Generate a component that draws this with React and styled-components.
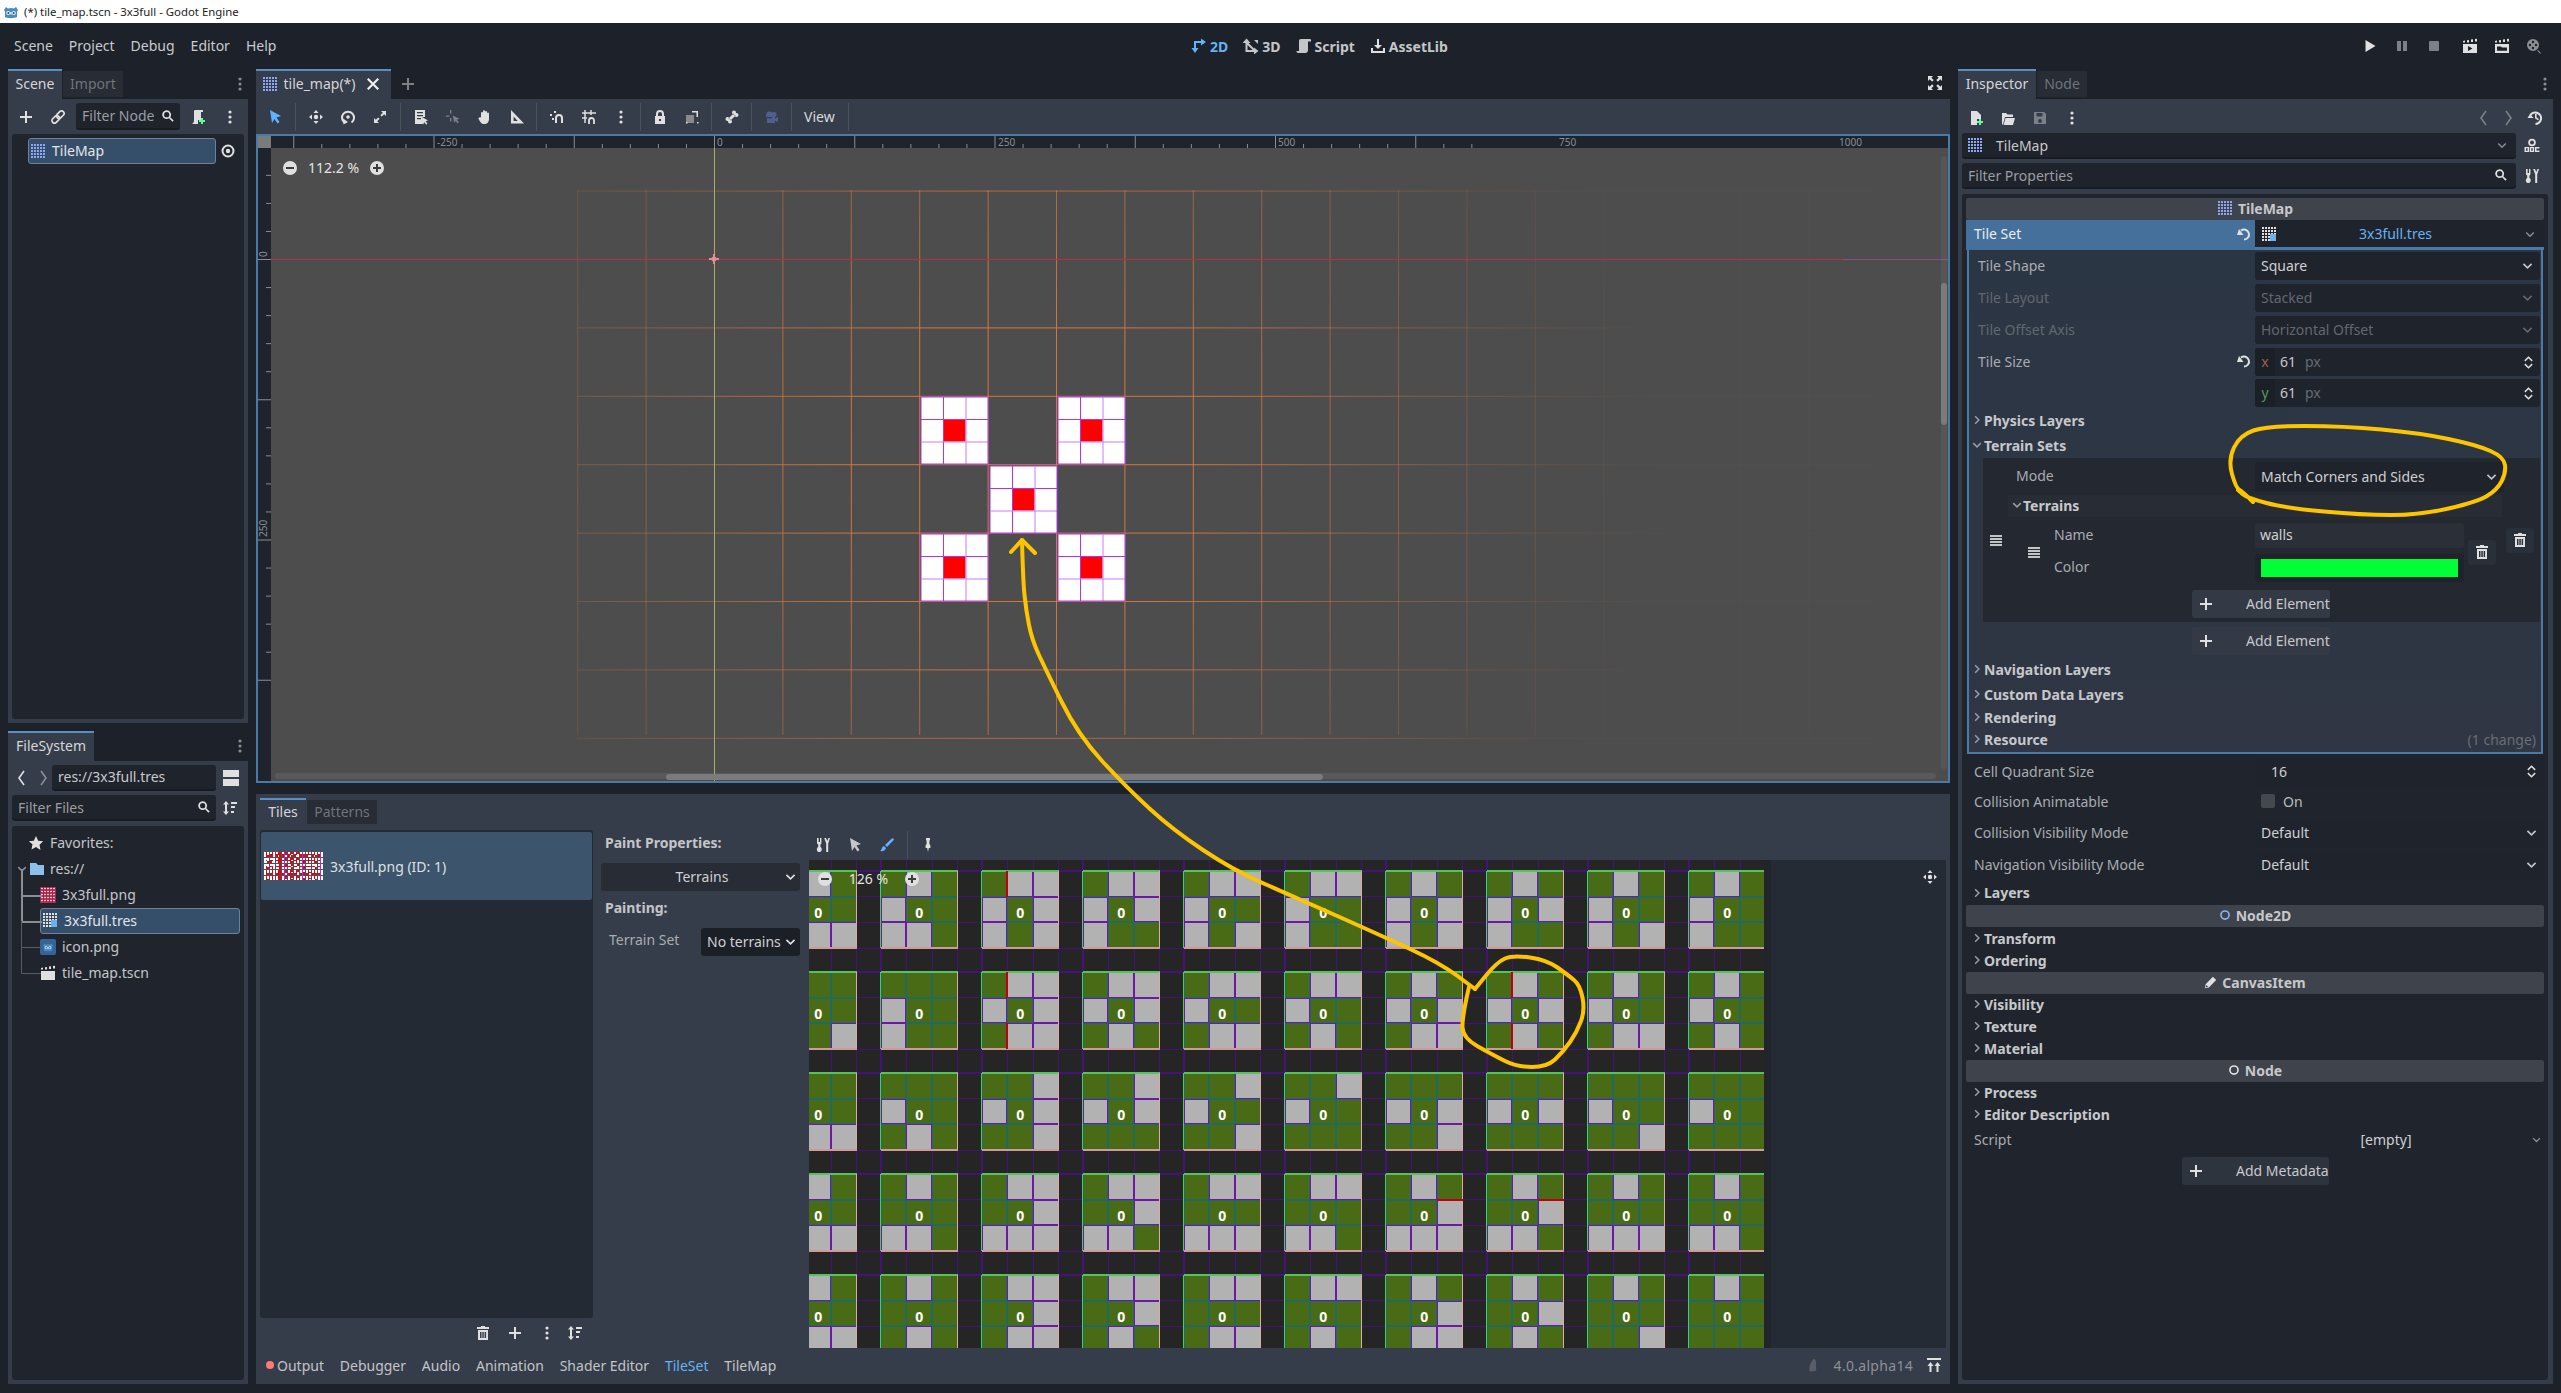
import React from "react";
import styled, { createGlobalStyle } from "styled-components";

const BASE = "#1d2129";
const PANEL = "#363d4a";
const DARK = "#20252d";
const FIELD = "#1f232b";
const BLUE = "#4a7aa8";
const TEXT = "#d9dadc";
const LABEL = "#a9acb1";
const DISABLED = "#62676f";

const GlobalStyle = createGlobalStyle`
  html, body { margin: 0; padding: 0; width: 100%; height: 100%; overflow: hidden; background: ${BASE}; }
  #root { width: 100%; height: 100%; }
  * { box-sizing: border-box; }
`;

const range = (a, n, step = 1) => Array.from({ length: n }, (_, i) => a + i * step);
const ball = (x, y, r) => `M${x - r} ${y}a${r} ${r} 0 1 0 ${2 * r} 0a${r} ${r} 0 1 0 ${-2 * r} 0z`;
const dotGrid = (fill) =>
  range(1, 5, 3).flatMap((x) => range(1, 5, 3).map((y) => <rect key={x + "-" + y} x={x} y={y} width="2" height="2" fill={fill} />));

// godot editor icons, drawn on a 16 grid
const Glyphs = {
  plus: <path d="M7 2h2v5h5v2H9v5H7V9H2V7h5z" />,
  close: <path d="M3.500 2L8 6.500 12.500 2 14 3.500 9.500 8 14 12.500 12.500 14 8 9.500 3.500 14 2 12.500 6.500 8 2 3.500z" />,
  dots: <path d={ball(8, 3, 1.6) + ball(8, 8, 1.6) + ball(8, 13, 1.6)} />,
  search: <path fillRule="evenodd" d="M6.5 1.5a5 5 0 1 0 2.8 9.1l3.8 3.9 1.4-1.4-3.9-3.8a5 5 0 0 0-4.1-7.8zm0 2a3 3 0 1 1 0 6 3 3 0 0 1 0-6z" />,
  chevron: <path d="M3 6l5 5 5-5" fill="none" stroke="currentColor" strokeWidth="2" />,
  chevronRight: <path d="M5 2l6 6-6 6" fill="none" stroke="currentColor" strokeWidth="2.4" />,
  chevronOpen: <path d="M2 5l6 6 6-6" fill="none" stroke="currentColor" strokeWidth="2.4" />,
  left: <path d="M10 1L5 8l5 7" fill="none" stroke="currentColor" strokeWidth="1.6" />,
  right: <path d="M6 1l5 7-5 7" fill="none" stroke="currentColor" strokeWidth="1.6" />,
  link: (
    <g transform="rotate(45 8 8)" fill="none" stroke="currentColor" strokeWidth="1.7">
      <rect x="5.5" y="0.5" width="5" height="8.5" rx="2.5" />
      <rect x="5.5" y="7" width="5" height="8.5" rx="2.5" />
    </g>
  ),
  scriptAdd: (
    <>
      <path d="M5 1h8v2h-2v8H8v4H2c1.4-1 2-2 2-4V3c0-1 0-2 1-2z" />
      <path d="M11 9h2v2h2v2h-2v2h-2v-2H9v-2h2z" fill="#5fff97" />
    </>
  ),
  eye: <path fillRule="evenodd" d={ball(8, 8, 6.5) + ball(8, 8, 4.5) + ball(8, 8, 2.2)} />,
  zoomOut: (
    <>
      <path d={ball(8, 8, 7)} />
      <rect x="4" y="7" width="8" height="2" fill="#3c3c3c" />
    </>
  ),
  zoomIn: (
    <>
      <path d={ball(8, 8, 7)} />
      <path d="M7 4h2v3h3v2H9v3H7V9H4V7h3z" fill="#3c3c3c" />
    </>
  ),
  select: <path d="M3 1l11 6-4.5 1.5L12.5 13l-2 1.5-3-4.6L5 14z" />,
  move: <path d={"M8 1l2.5 3h-5zM8 15l-2.5-3h5zM1 8l3-2.5v5zM15 8l-3 2.5v-5z" + ball(8, 8, 2.2)} />,
  rotate: (
    <>
      <path d="M4.5 13.5A6 6 0 1 1 11.5 13.5" fill="none" stroke="currentColor" strokeWidth="2" />
      <path d={ball(8, 8, 1.8) + "M3 9.5l5 3.5-4.5 2.5z"} />
    </>
  ),
  scale: <path d="M9 2h5v5l-1.8-1.8-2.4 2.4-1.4-1.4 2.4-2.4zM7 14H2V9l1.8 1.8 2.4-2.4 1.4 1.4-2.4 2.4z" />,
  listSelect: <path fillRule="evenodd" d="M2 1h10v7H9l1 7H2zM4 3v1.2h6V3zM4 6v1.2h6V6zM4 9v1.2h4V9zM9 8l6 3.4-2.4.9 1.8 2.3-1.2 1.1-1.8-2.4-1.4 2.1z" />,
  pivot: <path d="M5 1h1.4v3.5H5zM1 6.4h3.5v1.4H1zM7.8 6.4l6.6 3.4-2.6 1 2 2.5-1.2 1.1-2-2.6-1.4 2.3zM5 9h1.4v3.5H5z" />,
  hand: <path d="M4 8.5V4a1 1 0 0 1 2 0V2.2a1 1 0 0 1 2 0V3a1 1 0 0 1 2 0v1.5a1 1 0 0 1 2 0V10c0 3-2 5-4.5 5S4 14 2.4 11.4L1.6 10c-.6-1 1-2.4 2.4-1.5z" />,
  ruler: <path fillRule="evenodd" d="M2 1l13 13.5H2zM4.6 7.6v4.3h4.2z" />,
  snap: (
    <>
      <path d="M7 14V9a3 3 0 0 1 6 0v5" fill="none" stroke="currentColor" strokeWidth="2" />
      <path d="M1 5h2v2H1zM5 2h2v2H5zM3 9h2v2H3z" />
    </>
  ),
  gridSnap: (
    <>
      <path d="M4 1v13M10 1v5M1 4h14M1 9h5" fill="none" stroke="currentColor" strokeWidth="1.5" />
      <path d="M8 15v-3.5a2.5 2.5 0 0 1 5 0V15" fill="none" stroke="currentColor" strokeWidth="1.8" />
    </>
  ),
  lock: (
    <>
      <path d="M5 7V5a3 3 0 0 1 6 0v2" fill="none" stroke="currentColor" strokeWidth="2" />
      <path fillRule="evenodd" d="M3 7h10v8H3zM7 10v2h2v-2z" />
    </>
  ),
  group: (
    <>
      <rect x="2" y="6" width="8" height="8" fill="#8a8a8a" />
      <path fillRule="evenodd" d="M8 2h6v6h-1.5V3.5H8zM2 13h1.5v1.5H2zM13 13h1.5v1.5H13z" />
    </>
  ),
  bone: <path d={"M4.5 9.5l5-5 2 2-5 5z" + ball(10, 3.5, 2) + ball(12.5, 6, 2) + ball(3.5, 10, 2) + ball(6, 12.5, 2)} />,
  camera: <path d={ball(5.5, 6, 3.5) + ball(10, 5.5, 2.5) + "M3 8h8v6H3zM11 9.5l3-1.5v5l-3-1.5z"} />,
  view2d: (
    <>
      <path d="M4 11V4h7" fill="none" stroke="currentColor" strokeWidth="2" />
      <path d="M0.5 10h7L4 15zM10 0.5v7L15 4z" />
    </>
  ),
  view3d: (
    <>
      <path d="M3.5 4v9h9M4 5l8 8" fill="none" stroke="currentColor" strokeWidth="2" />
      <path d="M3.5 0.5L7.5 5h-8zM15.5 13l-4.5 3.5v-7z" />
      <path d="M11 2h4v4z" />
    </>
  ),
  script: <path d="M5 1h9c1 0 1.4 1.2 1 2.4h-3V12c0 1.6-1 3-2.5 3H2c-.8 0-1.6-.8-1.6-2h2.6V3c0-1.2.6-2 2-2z" />,
  assetLib: <path d="M7 1h2v6h3l-4 4-4-4h3zM1 10h2v3h10v-3h2v5H1z" />,
  play: <path d="M3.5 2l10 6-10 6z" />,
  pause: <path d="M3 3h4v10H3zM9 3h4v10H9z" />,
  stop: <rect x="3" y="3" width="10" height="10" rx="1" />,
  clapPlay: <path fillRule="evenodd" d="M1 6h14v9H1zM6 8v5l4.5-2.5zM1 3l2-.4v2H1zM5 2.2l2-.3v2.6H5zM9 1.6l2-.3V4H9zM13 1l2-.3V3.6h-2z" />,
  clapOpen: <path fillRule="evenodd" d="M1 6h14v9H1zM3 8.4v4.4h10V9.6H8L7 8.4zM1 3l2-.4v2H1zM5 2.2l2-.3v2.6H5zM9 1.6l2-.3V4H9zM13 1l2-.3V3.6h-2z" />,
  movie: <path fillRule="evenodd" d={ball(7, 7, 6) + ball(7, 4, 1.2) + ball(7, 10, 1.2) + ball(4, 7, 1.2) + ball(10, 7, 1.2) + "M12 12l3 3-.8.8-3-3z"} />,
  trash: <path fillRule="evenodd" d="M6 1h4v1h4v2H2V2h4zM3 5h10v10H3zM5 7v6h1.5V7zM7.3 7v6h1.5V7zM9.6 7v6h1.5V7z" />,
  handle: <path d="M2 3h12v2H2zM2 6h12v2H2zM2 9h12v2H2zM2 12h12v2H2z" />,
  reload: (
    <>
      <path d="M5 4.6A5 5 0 1 1 8 13.6" fill="none" stroke="currentColor" strokeWidth="2" />
      <path d="M1 9h6.5L3 3z" />
    </>
  ),
  doc: (
    <>
      <path fillRule="evenodd" d={ball(8, 4.5, 3.8) + ball(8, 4.5, 2)} />
      <path fillRule="evenodd" d="M0.5 9h4.6v5H0.5zM2 10.2v2.6h1.6v-2.6zM5.8 9h4.4v5H5.8zM7.3 10.2v2.6h1.4v-2.6zM11 9h4.4v1.4H12.4v2.2h3V14H11z" />
    </>
  ),
  tools: (
    <>
      <path d="M2 1h1.6v4H5V1h1.4v5.4l-1 1V10c1.4.6 1.6 2.2 1.2 3.4C6 14.6 5 15 4.2 15s-1.8-.5-2.2-1.6C1.6 12.2 2 10.600 3.2 10V7.400L2 6.400z" />
      <path d="M9.200 1H11l1.200 3L13.500 1H15l-1.800 5.400V15h-2V6.400z" />
    </>
  ),
  history: (
    <>
      <path d="M3.400 5A5.800 5.800 0 1 1 8.500 14" fill="none" stroke="currentColor" strokeWidth="2" />
      <path d="M0.500 8h6L3 4zM8 4h1.600v3.400L12 9l-1 1.300-3-2z" />
    </>
  ),
  fileAdd: (
    <>
      <path d="M3 1h6l4 4v4H9v6H3z" />
      <path d="M11 9h2v2h2v2h-2v2h-2v-2H9v-2h2z" fill="#5fff97" />
    </>
  ),
  folderOpen: <path fillRule="evenodd" d="M2 3h4l1.500 1.500H13V7H5L3 14.500H2zM5.500 8H15l-2 7H3.600z" />,
  save: <path fillRule="evenodd" d="M2 2h10l2 2v10H2zM4.500 3v3.500h6V3zM8 9a2 2 0 1 0 0 4 2 2 0 0 0 0-4z" />,
  updown: <path d="M3.500 6L8 1.500 12.500 6M3.500 10L8 14.500 12.500 10" fill="none" stroke="currentColor" strokeWidth="1.800" />,
  star: <path d="M8 1l2.200 4.800 5 .5-3.700 3.400 1 5.300L8 12l-4.500 2.500 1-5.300L.8 6.300l5-.5z" />,
  folder: <path d="M1 2h6l2 2h6v10H1z" />,
  clap: <path d="M1 6h14v9H1zM1 3l2-.4v2H1zM5 2.200l2-.3v2.600H5zM9 1.600l2-.3V4H9zM13 1l2-.3V3.600h-2z" />,
  split: <path d="M0 0h16v7H0zM0 9h16v7H0z" />,
  sort: <path d="M4 1l3 3.500H5v7h2l-3 3.500-3-3.500h2v-7H1zM9 2h6v2H9zM9 6h4v2H9zM9 11h3v2H9z" />,
  fullscreen: <path d="M1 1h5L4.300 2.700l2.400 2.400-1.600 1.600-2.400-2.400L1 6zM15 15h-5l1.700-1.700-2.400-2.400 1.600-1.600 2.400 2.400L15 10zM15 1v5l-1.700-1.700-2.400 2.400-1.600-1.600 2.400-2.400L10 1zM1 15v-5l1.700 1.700 2.400-2.400 1.600 1.600-2.400 2.400L6 15z" />,
  pin: <path d="M6 1h4v2l-.6.4V7l1 1.600V11H8.800L8 15l-.8-4H5.600V8.600l1-1.600V3.400L6 3z" />,
  brush: <path d="M14.500 1.500c.6.600.4 1.400-.2 2L8 10 6 8l6.500-6.300c.6-.6 1.400-.8 2-.2zM5 9l2 2c-.4 2.500-3 3.500-6 3 1.500-1 1.500-2 2-3.300C3.400 10 4 9.400 5 9z" />,
  pen: <path d="M11 1l4 4-9 9-5 1 1-5zM2.800 11l-.8 3 3-.8z" />,
  ring: <path fillRule="evenodd" d={ball(8, 8, 6.500) + ball(8, 8, 4.300)} />,
  signal: <path d="M9 2c2 0 2 3 2 6s1 5-1 6l-5 .5c-1-1-.5-2-.5-4s3-8.500 4.500-8.500z" />,
  pinBottom: <path d="M1 1h14v2H1zM4.500 5l3 4h-2v6H3.500V9h-2zM11.500 5l3 4h-2v6h-2V9h-2z" />,
  tilemap: <>{dotGrid("currentColor")}</>,
  tileset: (
    <>
      {dotGrid("#e0e0e0")}
      <rect x="9" y="8" width="6" height="7" fill="#6db0ee" />
    </>
  ),
  godot: (
    <>
      <path d="M3 3l2 1.500L8 4l3 .5L13 3l2 3-1 1.500V13c-2 1.500-10 1.500-12 0V7.500L1 6z" fill="#478cbf" />
      <path d={ball(5.200, 9, 2) + ball(10.800, 9, 2)} fill="#e8eef4" />
      <path d={ball(5.400, 9, 1) + ball(10.600, 9, 1)} fill="#2c4660" />
      <rect x="7.200" y="8" width="1.600" height="2.400" fill="#e8eef4" />
    </>
  ),
};

const Svg = styled.svg`
  display: block;
  flex: none;
  width: ${(p) => p.$size}px;
  height: ${(p) => p.$size}px;
  color: ${(p) => p.$color};
  fill: currentColor;
`;

const Icon = ({ name, size = 16, color = "#e0e0e0" }) => (
  <Svg viewBox="0 0 16 16" $size={size} $color={color}>
    {Glyphs[name]}
  </Svg>
);

const Page = styled.div`
  width: 100vw;
  height: 100vh;
  position: relative;
  display: flex;
  flex-direction: column;
  background: ${BASE};
  color: ${TEXT};
  font-family: "Noto Sans", sans-serif;
  font-size: 14px;
  white-space: nowrap;
`;

const TitleBar = styled.div`
  height: 23px;
  flex: none;
  display: flex;
  align-items: center;
  gap: 5px;
  padding-left: 3px;
  background: #fff;
  color: #222;
  font-size: 11.4px;
`;

const MenuBar = styled.div`
  height: 46px;
  flex: none;
  display: flex;
  align-items: center;
`;

const MenuLeft = styled.div`
  width: 1191px;
  flex: none;
  display: flex;
  gap: 16px;
  padding-left: 14px;
  padding-bottom: 2px;
  color: #c9cbce;
`;

const Screens = styled.div`
  display: flex;
  gap: 15px;
`;

const ScreenBtn = styled.div`
  display: flex;
  align-items: center;
  gap: 3px;
  font-weight: 700;
  color: ${(p) => (p.$active ? "#63b3f5" : "#c4c6c9")};
`;

const RunBtns = styled.div`
  margin-left: auto;
  margin-right: 11px;
  display: flex;
`;

const Slot = styled.div`
  width: ${(p) => p.$w || 32}px;
  margin-left: ${(p) => p.$ml || 0}px;
  flex: none;
  display: flex;
  align-items: center;
  justify-content: center;
`;

const Main = styled.div`
  flex: 1;
  min-height: 0;
  display: flex;
  gap: 8px;
  padding: 0 8px 9px;
`;

const LeftCol = styled.div`
  width: 240px;
  flex: none;
  display: flex;
  flex-direction: column;
  gap: 8px;
`;

const Dock = styled.div`
  flex: 1;
  min-height: 0;
  display: flex;
  flex-direction: column;
`;

const TabRow = styled.div`
  height: ${(p) => p.$h || 30}px;
  flex: none;
  display: flex;
  align-items: flex-start;
`;

const Tab = styled.div`
  width: ${(p) => p.$w}px;
  flex: none;
  display: flex;
  align-items: center;
  justify-content: center;
  gap: 5px;
  margin-top: ${(p) => (p.$active ? 0 : 2)}px;
  margin-left: ${(p) => (p.$active ? 0 : 1)}px;
  padding-bottom: ${(p) => (p.$active ? 3 : 2)}px;
  height: ${(p) => (p.$active ? p.$tall || 30 : (p.$tall || 30) - 4)}px;
  background: ${(p) => (p.$active ? PANEL : "#272c35")};
  border-top: ${(p) => (p.$active ? `2px solid #5a8fc5` : "none")};
  color: ${(p) => (p.$active ? "#d4d5d8" : "#6f747b")};
`;

const TabDots = styled.div`
  margin-left: auto;
  margin-top: 7px;
  margin-right: 0;
  opacity: 0.55;
`;

const DockBody = styled.div`
  flex: 1;
  min-height: 0;
  display: flex;
  flex-direction: column;
  gap: 4px;
  padding: 4px;
  background: ${PANEL};
`;

const ToolRow = styled.div`
  height: ${(p) => p.$h || 27}px;
  flex: none;
  display: flex;
  align-items: center;
`;

const FieldBox = styled.div`
  flex: ${(p) => (p.$w ? "none" : 1)};
  width: ${(p) => (p.$w ? `${p.$w}px` : "auto")};
  height: ${(p) => p.$h || 27}px;
  margin-left: ${(p) => p.$ml || 0}px;
  display: flex;
  align-items: center;
  justify-content: space-between;
  padding: 0 5px 0 6px;
  background: ${FIELD};
  border-bottom: 2px solid #181b21;
  border-radius: 3px;
  color: ${(p) => p.$color || "#9a9da2"};
`;

const TreeBox = styled.div`
  flex: 1;
  min-height: 0;
  padding-top: 4px;
  background: ${DARK};
  border-radius: 3px;
`;

const SceneRow = styled.div`
  height: 26px;
  display: flex;
  align-items: center;
`;

const SelectedNode = styled.div`
  width: ${(p) => p.$w}px;
  height: 26px;
  margin-left: ${(p) => p.$ml}px;
  display: flex;
  align-items: center;
  gap: ${(p) => p.$gap || 6}px;
  padding-left: 1px;
  padding-bottom: 1px;
  background: #354f6a;
  border: 1px solid #6f8296;
  border-radius: 3px;
  color: #e4e5e7;
`;

const FsRow = styled.div`
  position: relative;
  height: 26px;
  display: flex;
  align-items: center;
  gap: ${(p) => p.$gap ?? 6}px;
  padding-left: ${(p) => p.$indent}px;
  color: #c4c6c9;

  &::before {
    content: ${(p) => (p.$branch ? '""' : "none")};
    position: absolute;
    left: 9px;
    top: -13px;
    width: 19px;
    height: 26px;
    border-left: ${(p) => (p.$strong ? "2px solid #8a8d92" : "1px solid #565a61")};
    border-bottom: ${(p) => (p.$strong ? "2px solid #8a8d92" : "1px solid #565a61")};
  }
`;

const FolderName = styled.span`
  margin-left: 3px;
`;

const CenterCol = styled.div`
  flex: 1;
  min-width: 0;
  display: flex;
  flex-direction: column;
  gap: 11px;
`;

const EditorBlock = styled.div`
  height: 714px;
  flex: none;
  display: flex;
  flex-direction: column;
`;

const AddTab = styled.div`
  margin: 7px 0 0 9px;
  opacity: 0.5;
`;

const FullBtn = styled.div`
  margin: 6px 7px 0 auto;
`;

const ViewToolbar = styled.div`
  height: 35px;
  flex: none;
  display: flex;
  align-items: center;
  padding-left: 3px;
  background: ${PANEL};
`;

const Sep = styled.div`
  width: 1px;
  height: 28px;
  flex: none;
  margin: 0 ${(p) => p.$r ?? 4}px 0 ${(p) => p.$l ?? 4}px;
  background: #4b525e;
`;

const ViewportFrame = styled.div`
  position: relative;
  flex: 1;
  min-height: 0;
  border: 2px solid ${BLUE};
  background: #4d4d4d;
  overflow: hidden;
`;

const ZoomWidget = styled.div`
  position: absolute;
  left: ${(p) => p.$x}px;
  top: ${(p) => p.$y}px;
  display: flex;
  align-items: center;
  color: #e4e4e4;
`;

const ZoomValue = styled.div`
  width: ${(p) => p.$w}px;
  text-align: center;
`;

const Scroll = styled.div`
  position: absolute;
  background: ${(p) => p.$c};
  border-radius: 3px;
`;

const BottomPanel = styled.div`
  flex: 1;
  min-height: 0;
  display: flex;
  flex-direction: column;
  background: ${PANEL};
`;

const BottomBody = styled.div`
  height: 554px;
  flex: none;
  display: flex;
  padding: 4px 4px 0;
`;

const SourceCol = styled.div`
  width: 333px;
  flex: none;
  display: flex;
  flex-direction: column;
`;

const SourceList = styled.div`
  margin-top: 4px;
  height: 488px;
  padding: 2px 1px;
  background: #242a33;
  border-radius: 3px;
`;

const SourceItem = styled.div`
  height: 68px;
  display: flex;
  align-items: center;
  gap: 6px;
  padding-left: 3px;
  background: #3d546d;
  border-radius: 2px;
  color: #dfe0e2;
`;

const SourceActions = styled.div`
  height: 30px;
  display: flex;
  align-items: center;
  justify-content: flex-end;
  padding-right: 6px;
`;

const PaintCol = styled.div`
  width: 216px;
  flex: none;
  padding-top: 32px;
  display: flex;
  flex-direction: column;
`;

const PaintHead = styled.div`
  height: 26px;
  display: flex;
  align-items: center;
  padding-left: 12px;
  padding-bottom: 2px;
  font-weight: 700;
  color: #c3c5c9;
`;

const PaintSelect = styled.div`
  height: 28px;
  width: ${(p) => p.$w}px;
  margin-left: ${(p) => p.$ml}px;
  margin-top: 7px;
  margin-bottom: 4px;
  display: flex;
  align-items: center;
  justify-content: space-between;
  padding: 0 3px 2px 6px;
  background: ${(p) => (p.$dark ? "#1b1f26" : "#272c35")};
  border-radius: 3px;
  color: #cfd0d3;
`;

const CenterLabel = styled.span`
  flex: 1;
  text-align: center;
  padding-left: ${(p) => p.$pl || 0}px;
  padding-right: ${(p) => p.$pr || 0}px;
`;

const TerrainSetRow = styled.div`
  display: flex;
  align-items: center;
`;

const DimLabel = styled.div`
  width: 108px;
  padding-left: 16px;
  padding-bottom: 2px;
  color: ${LABEL};
`;

const AtlasCol = styled.div`
  flex: 1;
  min-width: 0;
  padding-top: 32px;
  display: flex;
  flex-direction: column;
`;

const AtlasTools = styled.div`
  height: 30px;
  flex: none;
  margin-left: -2px;
  display: flex;
  align-items: center;
`;

const AtlasSep = styled.div`
  width: 1px;
  height: 28px;
  background: #4b525e;
  margin: 0 4px 0 4px;
`;

const AtlasView = styled.div`
  position: relative;
  height: 488px;
  flex: none;
  display: flex;
  background: #252b35;
  overflow: hidden;
`;

const AtlasStrip = styled.div`
  width: 7px;
  flex: none;
  background: #21252b;
`;

const AtlasMove = styled.div`
  position: absolute;
  right: 8px;
  top: 9px;
`;

const StatusBar = styled.div`
  height: 36px;
  flex: none;
  display: flex;
  align-items: center;
  padding: 0 8px 2px 10px;
`;

const StatusDot = styled.div`
  width: 8px;
  height: 8px;
  margin-right: 3px;
  border-radius: 50%;
  background: #ff7a70;
`;

const StatusItems = styled.div`
  display: flex;
  gap: 15.8px;
  color: #c2c4c8;
`;

const StatusItem = styled.span`
  color: ${(p) => (p.$active ? "#63b3f5" : "inherit")};
`;

const Version = styled.div`
  margin-left: auto;
  display: flex;
  align-items: center;
  gap: 13px;
  letter-spacing: 0.3px;
  color: #8d9097;
`;

const RightCol = styled.div`
  width: 595px;
  flex: none;
  display: flex;
  flex-direction: column;
`;

const InspectorBody = styled.div`
  flex: 1;
  min-height: 0;
  display: flex;
  flex-direction: column;
  padding: 4px 5px 4px 4px;
  background: ${PANEL};
`;

const InspectorTools = styled.div`
  height: 30px;
  flex: none;
  margin-left: -2px;
  display: flex;
  align-items: center;
`;

const HeadRow = styled.div`
  height: 26px;
  flex: none;
  margin-bottom: 4px;
  display: flex;
  align-items: center;
`;

const HeadField = styled.div`
  width: 554px;
  height: 26px;
  flex: none;
  display: flex;
  align-items: center;
  gap: 12px;
  padding: 0 8px 0 5px;
  background: ${FIELD};
  border-bottom: 2px solid #181b21;
  border-radius: 3px;
  color: ${(p) => p.$color};
`;

const HeadText = styled.span`
  flex: 1;
  margin-left: ${(p) => p.$ml || 0}px;
`;

const PropsBox = styled.div`
  flex: 1;
  min-height: 0;
  margin-top: 1px;
  padding: 4px;
  background: ${DARK};
  border-radius: 3px;
`;

const ClassHeader = styled.div`
  height: 22px;
  display: flex;
  align-items: center;
  justify-content: center;
  gap: 5px;
  padding-bottom: 2px;
  background: #3f434c;
  border-radius: 2px;
  font-weight: 700;
  color: #c6c8cb;
`;

const TileSetRow = styled.div`
  height: 30px;
  display: grid;
  grid-template-columns: 289px 1fr;
`;

const ActiveLabel = styled.div`
  display: flex;
  align-items: center;
  justify-content: space-between;
  padding: 0 3px 3px 8px;
  background: #44709b;
  color: #eceef0;
`;

const ResourceValue = styled.div`
  display: flex;
  align-items: center;
  padding: 0 8px 0 6px;
  background: ${FIELD};
  border-bottom: 3px solid ${BLUE};
  color: #63b3f5;
`;

const Group = styled.div`
  margin: 0 1px;
  height: 504px;
  padding: 2px 1px 0 0;
  border: 2px solid ${BLUE};
  border-top: none;
  background: linear-gradient(#2b3644, #303643);
`;

const PropRow = styled.div`
  height: ${(p) => p.$h || 28}px;
  margin-top: ${(p) => p.$mt || 0}px;
  margin-bottom: ${(p) => p.$mb || 0}px;
  display: grid;
  grid-template-columns: ${(p) => p.$label || 286}px 1fr;
  align-items: stretch;
`;

const PropLabel = styled.div`
  height: 100%;
  max-height: 28px;
  display: flex;
  align-items: center;
  justify-content: space-between;
  padding: 0 3px 2px ${(p) => p.$pad ?? 9}px;
  color: ${(p) => (p.$off ? DISABLED : LABEL)};
`;

const ValueBox = styled.div`
  display: flex;
  align-items: center;
  justify-content: space-between;
  padding: 0 ${(p) => p.$r || 6}px ${(p) => (p.$flat ? 0 : 2)}px ${(p) => p.$l || 6}px;
  background: ${(p) => p.$bg || FIELD};
  border-radius: 3px;
  color: ${(p) => (p.$off ? DISABLED : "#cfd0d3")};
`;

const SizeStack = styled.div`
  display: flex;
  flex-direction: column;
  gap: 3px;
`;

const SpinBox = styled.div`
  height: 28px;
  display: flex;
  align-items: center;
  padding-right: 5px;
  background: ${FIELD};
  border-radius: 3px;
  color: #c8c9cc;
`;

const Axis = styled.div`
  width: 20px;
  height: 100%;
  display: flex;
  align-items: center;
  justify-content: center;
  padding-bottom: 2px;
  background: #1b1f26;
  border-radius: 3px 0 0 3px;
  color: ${(p) => p.$c};
`;

const SpinNum = styled.span`
  margin-left: 5px;
  margin-bottom: 2px;
`;

const SpinUnit = styled.span`
  margin-left: 9px;
  margin-right: auto;
  margin-bottom: 2px;
  color: #676b72;
`;

const Section = styled.div`
  height: ${(p) => p.$h || 22}px;
  margin-top: ${(p) => p.$mt || 0}px;
  display: flex;
  align-items: center;
  gap: 2px;
  padding-left: ${(p) => p.$pad ?? 3}px;
  padding-right: 4px;
  padding-bottom: 2px;
  font-weight: 700;
  color: #c6c8cb;
`;

const SectionNote = styled.span`
  margin-left: auto;
  font-weight: 400;
  color: #696e75;
`;

const DarkBlock = styled.div`
  height: 164px;
  margin-left: 14px;
  display: flex;
  align-items: center;
  background: #232831;
`;

const HandleSlot = styled.div`
  width: 25px;
  flex: none;
  display: flex;
  justify-content: center;
  opacity: 0.85;
`;

const ElementCol = styled.div`
  width: 496px;
  flex: none;
  display: flex;
  flex-direction: column;
`;

const TerrainsHead = styled.div`
  height: 22px;
  margin-top: 3px;
  margin-right: 2px;
  display: flex;
  align-items: center;
  gap: 1px;
  padding-left: 4px;
  padding-bottom: 2px;
  background: #272c35;
  font-weight: 700;
  color: #c6c8cb;
`;

const ElementRow = styled.div`
  height: 64px;
  margin-top: 3px;
  display: flex;
  align-items: center;
`;

const InnerHandle = styled.div`
  width: 46px;
  flex: none;
  padding-left: 18px;
  opacity: 0.85;
`;

const ElementFields = styled.div`
  width: 410px;
  flex: none;
  display: flex;
  flex-direction: column;
  gap: 6px;
`;

const ColorSwatch = styled.div`
  flex: 1;
  height: 18px;
  background: #00ff36;
`;

const TrashBtn = styled.div`
  width: 28px;
  height: 25px;
  flex: none;
  margin-left: ${(p) => p.$ml || 0}px;
  display: flex;
  align-items: center;
  justify-content: center;
  background: #2a3039;
  border-radius: 3px;
`;

const AddBtn = styled.div`
  width: ${(p) => p.$w || 138}px;
  height: 28px;
  margin-top: ${(p) => p.$mt || 0}px;
  margin-left: ${(p) => p.$ml}px;
  display: flex;
  align-items: center;
  gap: ${(p) => p.$gap || 32}px;
  padding-left: 6px;
  padding-bottom: 1px;
  background: ${(p) => p.$bg || "#343a45"};
  border-radius: 3px;
  color: #c8c9cc;
`;

const CheckBox = styled.div`
  width: 14px;
  height: 14px;
  background: #44484f;
  border-radius: 2px;
  margin-right: 8px;
`;

const CheckValue = styled.div`
  display: flex;
  align-items: center;
  padding-left: 6px;
  padding-bottom: 2px;
  color: #b9bbbf;
`;

const CanvasSvg = styled.svg`
  display: block;
  flex: none;
`;

const AxisText = styled.text`
  font-family: "Noto Sans", sans-serif;
  font-size: ${(p) => p.$size || 10}px;
  font-weight: ${(p) => p.$weight || 400};
`;

const Overlay = styled.svg`
  position: absolute;
  left: 0;
  top: 0;
  width: 2561px;
  height: 1393px;
  pointer-events: none;
`;

// tile patterns of the 3x3 atlas, # is terrain, . is wall
const ATLAS = [
  ["#.####" + "#..", "#.#.##..#", "#...#..#.", "#...#..##", "#...##.#.", "#...##.##", "#.#.#..#.", "#.#.#..##", "#.#.##.#.", "#.#.##.##"],
  ["#####" + "###.", "###.##.##", "#...#.#..", "#...#.#.#", "#...###..", "#...###.#", "#.#.#.#..", "#.#.#.#.#", "#.#.###..", "#.#.###.#"],
  ["#####" + "##..".slice(0, 4), "###.###.#", "##..#.##.", "##..#.###", "##..####.", "##..#####", "###.#.##.", "###.#.###", "###.####.", "###.#####"],
  ["#.#####..", "#.####..#", "#..##....", "#..##...#", "#..###...", "#..###..#", "#.###....", "#.###...#", "#.####...", "#.####..#"],
  ["#.#####..", "#.#####.#", "#..##.#..", "#..##.#.#", "#..####..", "#..####.#", "#.###.#..", "#.###.#.#", "#.####"+"##.", "#.#######"],
].map((row) => row.map((t) => t.padEnd(9, ".")));

const RED_V = [[2, 0, 0], [2, 1, 0], [2, 1, 2], [7, 1, 0], [7, 1, 2]];
const RED_H = [[6, 3], [7, 3]];

const PITCH = 101;
const CELL = 25.67;
const X0 = -29.3;
const Y0 = 11;

const TileAtlas = () => {
  const colsX = range(0, 10).flatMap((c) => [0, 1, 2, 3].map((i) => X0 + c * PITCH + i * CELL));
  const rowsY = range(0, 5).flatMap((r) => [0, 1, 2, 3].map((i) => Y0 + r * PITCH + i * CELL));
  return (
    <CanvasSvg width="955" height="488" viewBox="0 0 955 488" shapeRendering="crispEdges">
      <rect width="955" height="488" fill="#252525" />
      {colsX.map((x, i) => (
        <line key={"v" + i} x1={x} x2={x} y1="0" y2="488" stroke="#45117a" strokeWidth={i % 4 === 0 ? 2 : 1} />
      ))}
      {rowsY.map((y, i) => (
        <line key={"h" + i} y1={y} y2={y} x1="0" x2="955" stroke="#45117a" strokeWidth={i % 4 === 0 ? 2 : 1} />
      ))}
      {ATLAS.map((row, r) =>
        row.map((t, c) => {
          const tx = X0 + c * PITCH;
          const ty = Y0 + r * PITCH;
          return (
            <g key={c + "-" + r}>
              {[...t].map((ch, i) => {
                const green = ch === "#" || i === 4;
                return (
                  <rect
                    key={i}
                    x={tx + (i % 3) * CELL + 0.5}
                    y={ty + Math.floor(i / 3) * CELL + 0.5}
                    width={CELL - 1}
                    height={CELL - 1}
                    fill={green ? "#4a6b16" : "#b2b2b2"}
                    stroke={green ? "#1f6b62" : "#6e18a8"}
                    strokeWidth="1"
                  />
                );
              })}
              <line x1={tx} x2={tx + 77} y1={ty} y2={ty} stroke="#54c45a" strokeWidth="2" />
              <line x1={tx} x2={tx} y1={ty} y2={ty + 77} stroke="#45d24e" strokeWidth="1.500" />
              <line x1={tx + 77} x2={tx + 77} y1={ty} y2={ty + 77} stroke="#dcaaa6" strokeWidth="1.500" />
              <line x1={tx} x2={tx + 77} y1={ty + 77} y2={ty + 77} stroke="#cf9a98" strokeWidth="1.500" />
              <AxisText x={tx + 38.500} y={ty + 47} textAnchor="middle" fill="#fff" $size={14} $weight={700}>
                0
              </AxisText>
            </g>
          );
        })
      )}
      {RED_V.map(([c, r, k]) => (
        <rect key={`rv${c}${r}${k}`} x={X0 + c * PITCH + CELL - 1} y={Y0 + r * PITCH + k * CELL} width="2" height={CELL} fill="#c00010" />
      ))}
      {RED_H.map(([c, r]) => (
        <rect key={`rh${c}${r}`} x={X0 + c * PITCH + 2 * CELL} y={Y0 + r * PITCH + CELL - 1} width={CELL} height="2" fill="#c00010" />
      ))}
    </CanvasSvg>
  );
};

const SceneTile = ({ x, y }) => (
  <g>
    <rect x={x} y={y} width="67" height="67" fill="#fff" />
    <rect x={x + 22.500} y={y + 22.500} width="22" height="22" fill="#fe0000" />
    {[0, 22.500, 45, 67].map((o) => (
      <React.Fragment key={o}>
        <line x1={x + o} x2={x + o} y1={y} y2={y + 67} stroke={o === 45 ? "#c47cfb" : "#aa36f0"} strokeWidth="1" />
        <line y1={y + o} y2={y + o} x1={x} x2={x + 67} stroke={o === 45 ? "#c47cfb" : "#aa36f0"} strokeWidth="1" />
      </React.Fragment>
    ))}
  </g>
);

const Viewport2D = () => {
  const top = range(714 - 16 * 28.05, 44, 28.05).map((x, i) => ({ x, major: i % 5 === 1 }));
  const side = range(259 - 4 * 28.05, 20, 28.05).map((y, i) => ({ y, major: i % 5 === 4 }));
  const gridX = range(714 - 2 * 68.400, 20, 68.400);
  const gridY = range(259 - 68.400, 9, 68.400);
  return (
    <CanvasSvg width="1690" height="645" viewBox="258 136 1690 645">
      <defs>
        <radialGradient id="gridFade" gradientUnits="userSpaceOnUse" cx="1022" cy="465" r="640">
          <stop offset="0" stopColor="#d4763c" />
          <stop offset="0.25" stopColor="#d4763c" />
          <stop offset="0.55" stopColor="#d4763c" stopOpacity="0.5" />
          <stop offset="0.85" stopColor="#d4763c" stopOpacity="0.12" />
          <stop offset="1" stopColor="#d4763c" stopOpacity="0.03" />
        </radialGradient>
      </defs>
      <rect x="258" y="136" width="1690" height="645" fill="#4d4d4d" />
      {gridX.map((x) => (
        <rect key={x} x={x} y="190" width="1" height="545" fill="url(#gridFade)" />
      ))}
      {gridY.map((y) => (
        <rect key={y} x="577" y={y} width="1300" height="1" fill="url(#gridFade)" />
      ))}
      <rect x="714" y="148" width="1" height="633" fill="#a8b060" />
      <rect x="271" y="259" width="1677" height="1" fill="#b4323f" />
      <rect x="1843" y="259" width="105" height="1" fill="#8a4a90" />
      {[[921, 397], [1058, 397], [990, 466], [921, 534], [1058, 534]].map(([x, y]) => (
        <SceneTile key={x + "-" + y} x={x} y={y} />
      ))}
      <path d="M713 254h2v10h-2zM709 258h10v2h-10z" fill="#e88a9c" />
      <path d={ball(714, 259, 2.500)} fill="#e88a9c" />
      <rect x="258" y="136" width="1690" height="12" fill="#1f232b" />
      <rect x="258" y="136" width="13" height="645" fill="#1f232b" />
      <rect x="258" y="136" width="13" height="12" fill="#7b7b7b" />
      {top.filter((t) => t.x > 272).map((t) => (
        <rect key={t.x} x={t.x} y={t.major ? 136 : 144} width="1" height={t.major ? 12 : 4} fill="#8b8e93" />
      ))}
      {[[434, "-250"], [714, "0"], [995, "250"], [1275, "500"], [1556, "750"], [1836, "1000"]].map(([x, s]) => (
        <AxisText key={s} x={x + 3} y="146" fill="#8b8e93">
          {s}
        </AxisText>
      ))}
      {side.filter((s) => s.y > 150).map((s) => (
        <rect key={s.y} x={s.major ? 258 : 266} y={s.y} width={s.major ? 13 : 5} height="1" fill="#8b8e93" />
      ))}
      <AxisText transform="rotate(-90 267 257)" x="267" y="257" fill="#8b8e93">
        0
      </AxisText>
      <AxisText transform="rotate(-90 267 537)" x="267" y="537" fill="#8b8e93">
        250
      </AxisText>
    </CanvasSvg>
  );
};

const THUMB_CUTS = [[0, 2], [2, 1], [3, 2]];

const AtlasThumb = () => (
  <CanvasSvg width="60" height="28" viewBox="0 0 60 28" shapeRendering="crispEdges">
    {ATLAS.flatMap((row, r) =>
      row.flatMap((t, c) =>
        [...t].map((ch, i) => {
          const [ox, w] = THUMB_CUTS[i % 3];
          const [oy, h] = THUMB_CUTS[Math.floor(i / 3)];
          return (
            <rect
              key={`${c}-${r}-${i}`}
              x={c * 6 + ox}
              y={r * 6 + oy}
              width={w}
              height={h}
              fill={i === 4 || ch === "." ? "#f00000" : "#ffffff"}
            />
          );
        })
      )
    )}
    {[20, 38, 56].map((x) => (
      <rect key={x} x={x} y="0" width="1" height="28" fill="#a030e0" />
    ))}
  </CanvasSvg>
);

const PngIcon = () => (
  <CanvasSvg width="16" height="16" viewBox="0 0 16 16" shapeRendering="crispEdges">
    <rect width="16" height="16" fill="#d83038" />
    {range(1, 5, 3).map((y) => (
      <rect key={y} x="0" y={y} width="16" height="1" fill="#e8d0d4" />
    ))}
    {range(0, 6, 3).map((x) => (
      <rect key={x} x={x} y="0" width="1" height="16" fill="#8c2870" />
    ))}
  </CanvasSvg>
);

const GodotFile = () => (
  <CanvasSvg width="16" height="16" viewBox="0 0 16 16">
    <rect width="16" height="16" rx="2" fill="#33659a" />
    <g transform="translate(2.400 2.400) scale(0.7)">{Glyphs.godot}</g>
  </CanvasSvg>
);

const smooth = (pts) => {
  let d = `M${pts[0][0]} ${pts[0][1]}`;
  for (let i = 1; i < pts.length - 1; i++) {
    const mx = (pts[i][0] + pts[i + 1][0]) / 2;
    const my = (pts[i][1] + pts[i + 1][1]) / 2;
    d += `Q${pts[i][0]} ${pts[i][1]} ${mx} ${my}`;
  }
  const last = pts[pts.length - 1];
  return d + `L${last[0]} ${last[1]}`;
};

const ARROW = [[1022, 540], [1023, 580], [1026, 610], [1032, 640], [1045, 668], [1078, 735], [1127, 788], [1173, 830], [1233, 870], [1290, 895], [1380, 935], [1440, 963], [1475, 989]];
const CIRCLE = [[1469, 987], [1462, 1017], [1463, 1038], [1493, 1055], [1517, 1067], [1547, 1067], [1563, 1052], [1577, 1032], [1585, 1010], [1580, 985], [1568, 975], [1547, 960], [1513, 955], [1497, 962], [1475, 989]];
const ELLIPSE = [[2253, 502], [2242, 491], [2236, 488], [2228, 460], [2240, 435], [2267, 426], [2343, 426], [2420, 433], [2477, 445], [2504, 457], [2506, 473], [2497, 490], [2477, 502], [2420, 515], [2362, 515], [2286, 508], [2247, 498], [2238, 490]];

const Annotations = () => (
  <Overlay viewBox="0 0 2561 1393" fill="none" stroke="#fdc500" strokeWidth="4" strokeLinecap="round" strokeLinejoin="round">
    <path d={smooth(ARROW)} />
    <path d="M1011 552L1022 540L1035 553" />
    <path d={smooth(CIRCLE)} />
    <path d={smooth(ELLIPSE)} />
  </Overlay>
);

const ToolSlot = ({ name, color, size }) => (
  <Slot>
    <Icon name={name} color={color} size={size} />
  </Slot>
);

const SelectBox = ({ children, off, bg, chevron = "#c4c6c9" }) => (
  <ValueBox $off={off} $bg={bg}>
    {children}
    <Icon name="chevron" size={13} color={off ? DISABLED : chevron} />
  </ValueBox>
);

const Fold = ({ label, open, h, mt, pad, note }) => (
  <Section $h={h} $mt={mt} $pad={pad}>
    <Icon name={open ? "chevronOpen" : "chevronRight"} size={10} color="#9a9da2" />
    {label}
    {note && <SectionNote>{note}</SectionNote>}
  </Section>
);

const OuterRow = ({ label, children, h, mt }) => (
  <PropRow $label={289} $h={h} $mt={mt}>
    <PropLabel $pad={8}>{label}</PropLabel>
    {children}
  </PropRow>
);

const SceneDock = () => (
  <Dock>
    <TabRow>
      <Tab $active $w={54}>Scene</Tab>
      <Tab $w={60}>Import</Tab>
      <TabDots><Icon name="dots" /></TabDots>
    </TabRow>
    <DockBody>
      <ToolRow>
        <Slot $w={32} $ml={-2}><Icon name="plus" /></Slot>
        <Slot $w={32}><Icon name="link" /></Slot>
        <FieldBox $w={104} $ml={2}>
          Filter Node
          <Icon name="search" size={14} />
        </FieldBox>
        <Slot $ml={2}><Icon name="scriptAdd" /></Slot>
        <Slot><Icon name="dots" /></Slot>
      </ToolRow>
      <TreeBox>
        <SceneRow>
          <SelectedNode $w={188} $ml={16} $gap={6}>
            <Icon name="tilemap" color="#8da5f3" />
            TileMap
          </SelectedNode>
          <Slot $w={24}><Icon name="eye" /></Slot>
        </SceneRow>
      </TreeBox>
    </DockBody>
  </Dock>
);

const FileSystemDock = () => (
  <Dock>
    <TabRow>
      <Tab $active $w={86}>FileSystem</Tab>
      <TabDots><Icon name="dots" /></TabDots>
    </TabRow>
    <DockBody>
      <ToolRow $h={26}>
        <Slot $w={22} $ml={-1}><Icon name="left" /></Slot>
        <Slot $w={20}><Icon name="right" color="#8b8e93" /></Slot>
        <FieldBox $w={164} $h={26} $ml={-1} $color="#c8c9cc">res://3x3full.tres</FieldBox>
        <Slot $w={22} $ml={4}><Icon name="split" /></Slot>
      </ToolRow>
      <ToolRow $h={27}>
        <FieldBox $w={204} $h={26}>
          Filter Files
          <Icon name="search" size={14} />
        </FieldBox>
        <Slot $w={28}><Icon name="sort" /></Slot>
      </ToolRow>
      <TreeBox>
        <FsRow $indent={16}>
          <Icon name="star" />
          Favorites:
        </FsRow>
        <FsRow $indent={5} $gap={2}>
          <Icon name="chevronOpen" size={10} color="#8b8e93" />
          <Icon name="folder" color="#8cc0ea" />
          <FolderName>res://</FolderName>
        </FsRow>
        <FsRow $indent={28} $branch $strong>
          <PngIcon />
          3x3full.png
        </FsRow>
        <FsRow $branch $strong $indent={0}>
          <SelectedNode $w={200} $ml={28}>
            <Icon name="tileset" />
            3x3full.tres
          </SelectedNode>
        </FsRow>
        <FsRow $indent={28} $branch>
          <GodotFile />
          icon.png
        </FsRow>
        <FsRow $indent={28} $branch>
          <Icon name="clap" />
          tile_map.tscn
        </FsRow>
      </TreeBox>
    </DockBody>
  </Dock>
);

const EditorView = () => (
  <EditorBlock>
    <TabRow>
      <Tab $active $w={135}>
        <Icon name="tilemap" color="#8da5f3" />
        tile_map(*)
        <Slot $w={24}><Icon name="close" color="#f0f0f0" /></Slot>
      </Tab>
      <AddTab><Icon name="plus" /></AddTab>
      <FullBtn><Icon name="fullscreen" /></FullBtn>
    </TabRow>
    <ViewToolbar>
      <ToolSlot name="select" color="#5fb2ff" />
      <Sep $l={4} $r={4} />
      <ToolSlot name="move" />
      <ToolSlot name="rotate" />
      <ToolSlot name="scale" />
      <Sep $l={4} $r={4} />
      <ToolSlot name="listSelect" />
      <ToolSlot name="pivot" color="#7c8087" />
      <ToolSlot name="hand" />
      <ToolSlot name="ruler" />
      <Sep $l={3} $r={4} />
      <ToolSlot name="snap" />
      <ToolSlot name="gridSnap" />
      <ToolSlot name="dots" />
      <Sep $l={3} $r={3} />
      <ToolSlot name="lock" />
      <ToolSlot name="group" />
      <Sep $l={3} $r={4} />
      <ToolSlot name="bone" />
      <Sep $l={3} $r={4} />
      <ToolSlot name="camera" color="#4f5f90" />
      <Sep $l={3} $r={12} />
      View
      <Sep $l={13} />
    </ViewToolbar>
    <ViewportFrame>
      <Viewport2D />
      <ZoomWidget $x={24} $y={22}>
        <Icon name="zoomOut" />
        <ZoomValue $w={71}>112.2 %</ZoomValue>
        <Icon name="zoomIn" />
      </ZoomWidget>
      <Scroll $c="rgba(255,255,255,0.07)" style={{ left: 17, right: 12, bottom: 2, height: 6 }} />
      <Scroll $c="#7b7b7b" style={{ left: 408, width: 657, bottom: 1, height: 6 }} />
      <Scroll $c="rgba(255,255,255,0.05)" style={{ right: 1, top: 20, bottom: 12, width: 6 }} />
      <Scroll $c="#7b7b7b" style={{ right: 1, top: 147, height: 142, width: 6 }} />
    </ViewportFrame>
  </EditorBlock>
);

const TileSetPanel = () => (
  <BottomPanel>
    <BottomBody>
      <SourceCol>
        <TabRow $h={28}>
          <Tab $active $w={46} $tall={28}>Tiles</Tab>
          <Tab $w={70} $tall={28}>Patterns</Tab>
        </TabRow>
        <SourceList>
          <SourceItem>
            <AtlasThumb />
            3x3full.png (ID: 1)
          </SourceItem>
        </SourceList>
        <SourceActions>
          <ToolSlot name="trash" />
          <ToolSlot name="plus" />
          <ToolSlot name="dots" />
          <Slot $w={24}><Icon name="sort" /></Slot>
        </SourceActions>
      </SourceCol>
      <PaintCol>
        <PaintHead>Paint Properties:</PaintHead>
        <PaintSelect $w={199} $ml={8}>
          <CenterLabel $pl={13}>Terrains</CenterLabel>
          <Icon name="chevron" size={13} />
        </PaintSelect>
        <PaintHead>Painting:</PaintHead>
        <TerrainSetRow>
          <DimLabel>Terrain Set</DimLabel>
          <PaintSelect $w={99} $ml={0} $dark>
            No terrains
            <Icon name="chevron" size={13} />
          </PaintSelect>
        </TerrainSetRow>
      </PaintCol>
      <AtlasCol>
        <AtlasTools>
          <ToolSlot name="tools" />
          <ToolSlot name="select" color="#c4c6c9" />
          <ToolSlot name="brush" color="#5fb2ff" />
          <AtlasSep />
          <ToolSlot name="pin" />
        </AtlasTools>
        <AtlasView>
          <TileAtlas />
          <AtlasStrip />
          <ZoomWidget $x={8} $y={9}>
            <Icon name="zoomOut" />
            <ZoomValue $w={71}>126 %</ZoomValue>
            <Icon name="zoomIn" />
          </ZoomWidget>
          <AtlasMove><Icon name="move" /></AtlasMove>
        </AtlasView>
      </AtlasCol>
    </BottomBody>
    <StatusBar>
      <StatusDot />
      <StatusItems>
        <StatusItem>Output</StatusItem>
        <StatusItem>Debugger</StatusItem>
        <StatusItem>Audio</StatusItem>
        <StatusItem>Animation</StatusItem>
        <StatusItem>Shader Editor</StatusItem>
        <StatusItem $active>TileSet</StatusItem>
        <StatusItem>TileMap</StatusItem>
      </StatusItems>
      <Version>
        <Icon name="signal" color="#5a5f67" />
        4.0.alpha14
        <Icon name="pinBottom" />
      </Version>
    </StatusBar>
  </BottomPanel>
);

const TerrainElement = () => (
  <DarkBlock>
    <HandleSlot><Icon name="handle" /></HandleSlot>
    <ElementCol>
      <PropRow $label={247} $h={30}>
        <PropLabel $pad={8}>Mode</PropLabel>
        <SelectBox bg="#1f232b">Match Corners and Sides</SelectBox>
      </PropRow>
      <TerrainsHead>
        <Icon name="chevronOpen" size={10} color="#9a9da2" />
        <span>Terrains</span>
      </TerrainsHead>
      <ElementRow>
        <InnerHandle><Icon name="handle" /></InnerHandle>
        <ElementFields>
          <PropRow $label={201} $h={25}>
            <PropLabel $pad={0}>Name</PropLabel>
            <ValueBox $bg="#2b3038" $l={5}>walls</ValueBox>
          </PropRow>
          <PropRow $label={201} $h={28}>
            <PropLabel $pad={0}>Color</PropLabel>
            <ValueBox $bg="#1f232b" $flat><ColorSwatch /></ValueBox>
          </PropRow>
        </ElementFields>
        <TrashBtn $ml={4}><Icon name="trash" /></TrashBtn>
      </ElementRow>
      <AddBtn $ml={184} $mt={6}>
        <Icon name="plus" />
        Add Element
      </AddBtn>
    </ElementCol>
    <TrashBtn $ml={2}><Icon name="trash" /></TrashBtn>
  </DarkBlock>
);

const Inspector = () => (
  <RightCol>
    <TabRow>
      <Tab $active $w={78}>Inspector</Tab>
      <Tab $w={50}>Node</Tab>
      <TabDots><Icon name="dots" /></TabDots>
    </TabRow>
    <InspectorBody>
      <InspectorTools>
        <ToolSlot name="fileAdd" />
        <ToolSlot name="folderOpen" />
        <ToolSlot name="save" color="#7c8087" />
        <ToolSlot name="dots" />
        <Slot $w={24} $ml={384}><Icon name="left" color="#7c8087" /></Slot>
        <Slot $w={23}><Icon name="right" color="#7c8087" /></Slot>
        <ToolSlot name="history" />
      </InspectorTools>
      <HeadRow>
        <HeadField $color="#c8c9cc">
          <Icon name="tilemap" color="#8da5f3" />
          <HeadText $ml={1}>TileMap</HeadText>
          <Icon name="chevron" size={12} color="#8b8e93" />
        </HeadField>
        <Slot $w={32}><Icon name="doc" /></Slot>
      </HeadRow>
      <HeadRow>
        <HeadField $color="#9a9da2">
          <HeadText $ml={1}>Filter Properties</HeadText>
          <Icon name="search" size={14} />
        </HeadField>
        <Slot $w={32}><Icon name="tools" /></Slot>
      </HeadRow>
      <PropsBox>
        <ClassHeader>
          <Icon name="tilemap" color="#8da5f3" />
          TileMap
        </ClassHeader>
        <TileSetRow>
          <ActiveLabel>
            Tile Set
            <Icon name="reload" />
          </ActiveLabel>
          <ResourceValue>
            <Icon name="tileset" />
            <CenterLabel $pr={10}>3x3full.tres</CenterLabel>
            <Icon name="chevron" size={12} color="#8b8e93" />
          </ResourceValue>
        </TileSetRow>
        <Group>
          <PropRow $mb={4}>
            <PropLabel>Tile Shape</PropLabel>
            <SelectBox>Square</SelectBox>
          </PropRow>
          <PropRow $mb={4}>
            <PropLabel $off>Tile Layout</PropLabel>
            <SelectBox off>Stacked</SelectBox>
          </PropRow>
          <PropRow $mb={4}>
            <PropLabel $off>Tile Offset Axis</PropLabel>
            <SelectBox off>Horizontal Offset</SelectBox>
          </PropRow>
          <PropRow $h={58}>
            <PropLabel>
              Tile Size
              <Icon name="reload" />
            </PropLabel>
            <SizeStack>
              <SpinBox>
                <Axis $c="#a05f50">x</Axis>
                <SpinNum>61</SpinNum>
                <SpinUnit>px</SpinUnit>
                <Icon name="updown" size={13} />
              </SpinBox>
              <SpinBox>
                <Axis $c="#4f9a60">y</Axis>
                <SpinNum>61</SpinNum>
                <SpinUnit>px</SpinUnit>
                <Icon name="updown" size={13} />
              </SpinBox>
            </SizeStack>
          </PropRow>
          <Fold label="Physics Layers" h={26} mt={2} />
          <Fold label="Terrain Sets" open h={24} />
          <TerrainElement />
          <AddBtn $ml={223} $mt={5}>
            <Icon name="plus" />
            Add Element
          </AddBtn>
          <Fold label="Navigation Layers" h={26} mt={2} />
          <Fold label="Custom Data Layers" h={24} />
          <Fold label="Rendering" />
          <Fold label="Resource" note="(1 change)" />
        </Group>
        <OuterRow label="Cell Quadrant Size" mt={4}>
          <ValueBox $l={16}>
            16
            <Icon name="updown" size={13} />
          </ValueBox>
        </OuterRow>
        <OuterRow label="Collision Animatable" mt={2}>
          <CheckValue>
            <CheckBox />
            On
          </CheckValue>
        </OuterRow>
        <OuterRow label="Collision Visibility Mode" mt={3}>
          <SelectBox bg="#1f232b">Default</SelectBox>
        </OuterRow>
        <OuterRow label="Navigation Visibility Mode" mt={4}>
          <SelectBox bg="#1f232b">Default</SelectBox>
        </OuterRow>
        <Fold label="Layers" h={23} mt={3} pad={6} />
        <ClassHeader>
          <Icon name="ring" color="#8eb4f0" size={12} />
          Node2D
        </ClassHeader>
        <Fold label="Transform" mt={1} pad={6} />
        <Fold label="Ordering" pad={6} />
        <ClassHeader>
          <Icon name="pen" size={13} />
          CanvasItem
        </ClassHeader>
        <Fold label="Visibility" pad={6} />
        <Fold label="Texture" pad={6} />
        <Fold label="Material" pad={6} />
        <ClassHeader>
          <Icon name="ring" size={12} />
          Node
        </ClassHeader>
        <Fold label="Process" pad={6} />
        <Fold label="Editor Description" pad={6} />
        <OuterRow label="Script">
          <ValueBox $bg="transparent" $r={2}>
            <CenterLabel $pr={20}>[empty]</CenterLabel>
            <Icon name="chevron" size={11} color="#8b8e93" />
          </ValueBox>
        </OuterRow>
        <AddBtn $ml={216} $mt={3} $w={147} $gap={32} $bg="#2e343e">
          <Icon name="plus" />
          Add Metadata
        </AddBtn>
      </PropsBox>
    </InspectorBody>
  </RightCol>
);

const App = () => (
  <Page>
    <GlobalStyle />
    <TitleBar>
      <Icon name="godot" />
      (*) tile_map.tscn - 3x3full - Godot Engine
    </TitleBar>
    <MenuBar>
      <MenuLeft>
        <span>Scene</span>
        <span>Project</span>
        <span>Debug</span>
        <span>Editor</span>
        <span>Help</span>
      </MenuLeft>
      <Screens>
        <ScreenBtn $active><Icon name="view2d" color="#63b3f5" />2D</ScreenBtn>
        <ScreenBtn><Icon name="view3d" color="#c4c6c9" />3D</ScreenBtn>
        <ScreenBtn><Icon name="script" color="#c4c6c9" />Script</ScreenBtn>
        <ScreenBtn><Icon name="assetLib" color="#e0e0e0" />AssetLib</ScreenBtn>
      </Screens>
      <RunBtns>
        <ToolSlot name="play" />
        <ToolSlot name="pause" color="#7c8087" />
        <ToolSlot name="stop" color="#7c8087" />
        <Slot $ml={4}><Icon name="clapPlay" /></Slot>
        <ToolSlot name="clapOpen" />
        <ToolSlot name="movie" color="#8b8e93" />
      </RunBtns>
    </MenuBar>
    <Main>
      <LeftCol>
        <SceneDock />
        <FileSystemDock />
      </LeftCol>
      <CenterCol>
        <EditorView />
        <TileSetPanel />
      </CenterCol>
      <Inspector />
    </Main>
    <Annotations />
  </Page>
);

export default App;
